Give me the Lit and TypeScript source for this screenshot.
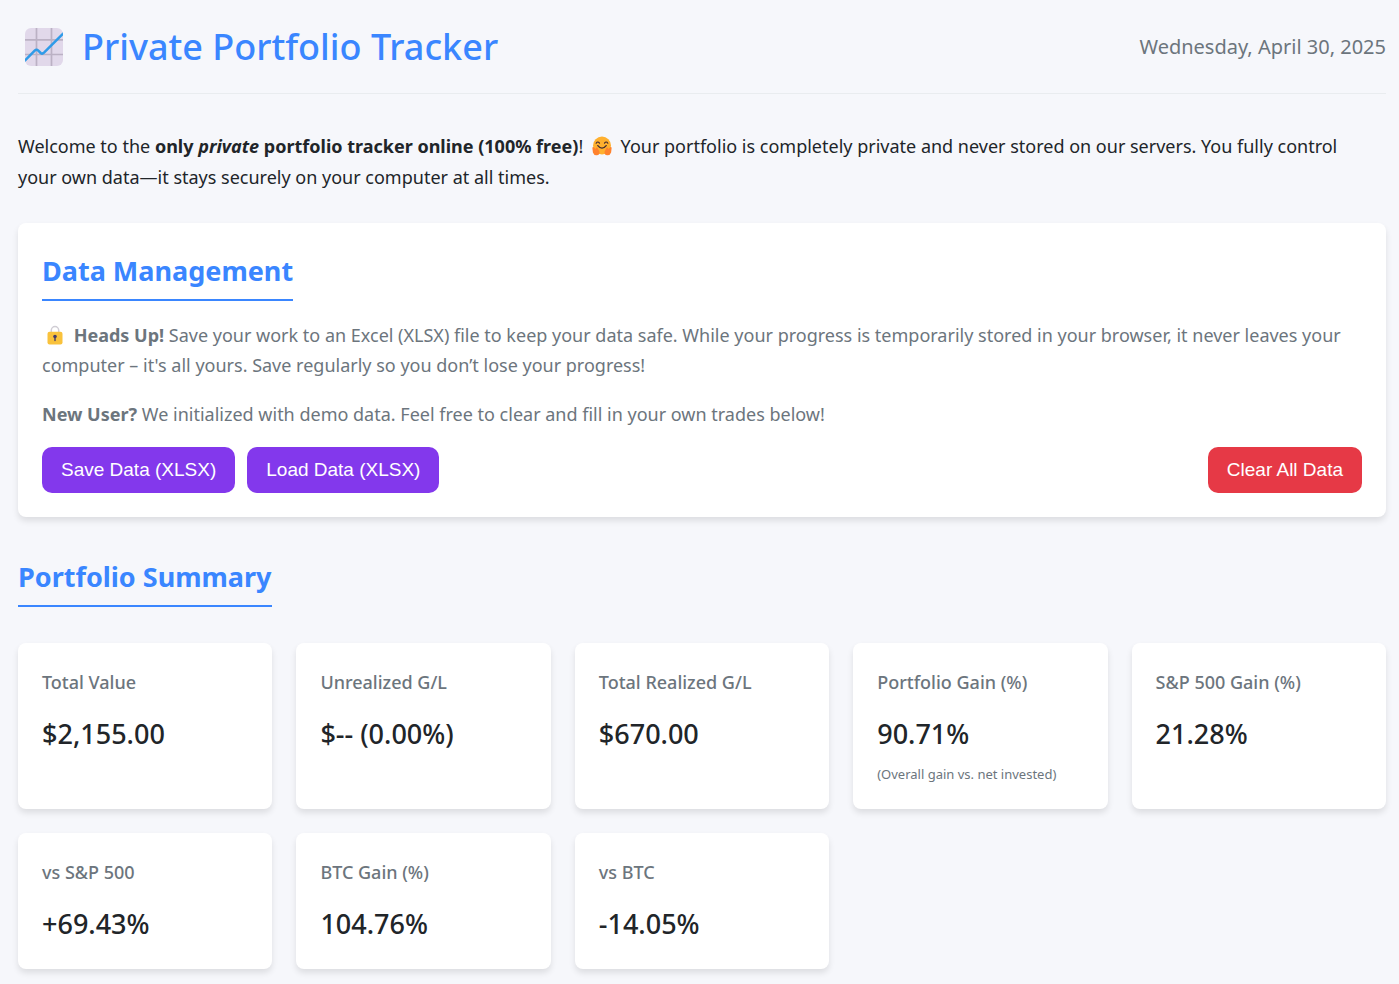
import { LitElement, html, css, nothing } from "lit";
import { customElement, property } from "lit/decorators.js";

interface Metric {
  label: string;
  value: string;
  note?: string;
}

const METRICS: Metric[] = [
  { label: "Total Value", value: "$2,155.00" },
  { label: "Unrealized G/L", value: "$-- (0.00%)" },
  { label: "Total Realized G/L", value: "$670.00" },
  { label: "Portfolio Gain (%)", value: "90.71%", note: "(Overall gain vs. net invested)" },
  { label: "S&P 500 Gain (%)", value: "21.28%" },
  { label: "vs S&P 500", value: "+69.43%" },
  { label: "BTC Gain (%)", value: "104.76%" },
  { label: "vs BTC", value: "-14.05%" },
];

const chartIcon = html`
  <svg class="chart" viewBox="0 0 38 38" aria-hidden="true">
    <defs><clipPath id="tile"><rect width="38" height="38" rx="6" /></clipPath></defs>
    <g clip-path="url(#tile)">
      <rect width="38" height="38" fill="#e1d8ea" />
      <path d="M11.5 0V38M26.5 0V38M0 11.8H38M0 26.5H38" stroke="#bbb1c4" stroke-width="1.7" fill="none" />
      <path d="M-1 33.5 9.7 22.6Q11.5 20.8 13.3 22.6L15.7 25Q17.3 26.3 19 24.7L39 4.8"
        stroke="#2f9be8" stroke-width="2.5" fill="none" stroke-linejoin="round" />
    </g>
  </svg>
`;

const hugIcon = html`
  <svg class="hug" viewBox="0 0 20 20" aria-hidden="true">
    <circle cx="10" cy="9.5" r="9" fill="#ffb02e" />
    <path d="M4.2 7.2Q5.7 4.8 7.5 7.2M12.5 7.2Q14.3 4.8 15.8 7.2" stroke="#402a32" stroke-width="1.2" fill="none" stroke-linecap="round" />
    <path d="M5.8 9.6Q10 14.8 14.2 9.6" stroke="#402a32" stroke-width="1.3" fill="none" stroke-linecap="round" />
    <path d="M.4 12.2Q.3 10.7 1.6 11L3.5 12.9 4.3 11.7Q5.4 11 5.7 12.3L7.4 15.5Q8 18.9 4.8 19.3 1.8 19.5.9 16.6Z" fill="#ff822d" />
    <path d="M19.6 12.2Q19.7 10.7 18.4 11L16.5 12.9 15.7 11.7Q14.6 11 14.3 12.3L12.6 15.5Q12 18.9 15.2 19.3 18.2 19.5 19.1 16.6Z" fill="#ff822d" />
  </svg>
`;

const lockIcon = html`
  <svg class="lock" viewBox="0 0 16 20" aria-hidden="true">
    <path d="M4.3 8V5.3a3.7 3.7 0 0 1 7.4 0V8" stroke="#d0cdd4" stroke-width="1.5" fill="none" />
    <rect x=".5" y="6.8" width="15" height="12.7" rx="2" fill="#f9c23c" />
    <circle cx="8" cy="11.5" r="1.8" fill="#433b6b" />
    <path d="M8 11.5V15.6" stroke="#433b6b" stroke-width="1.4" stroke-linecap="round" />
  </svg>
`;

@customElement("metric-card")
class MetricCard extends LitElement {
  @property({ attribute: false }) metric!: Metric;

  static styles = css`
    :host {
      display: block;
      padding: 24px;
      border-radius: 8px;
      background: #fff;
      box-shadow: 0 4px 6px rgba(0, 0, 0, 0.1);
    }
    .label {
      margin: 0 0 15px;
      font-size: 18px;
      font-weight: 500;
      line-height: 31px;
      color: #6c757d;
    }
    .value {
      margin: 0;
      font-size: 27px;
      font-weight: 500;
      line-height: 42px;
      color: #212529;
    }
    .note {
      margin: 8px 0 0;
      font-size: 13px;
      line-height: 22px;
      color: #6c757d;
    }
  `;

  render() {
    const { label, value, note } = this.metric;
    return html`
      <h3 class="label">${label}</h3>
      <p class="value">${value}</p>
      ${note ? html`<p class="note">${note}</p>` : nothing}
    `;
  }
}

@customElement("app-root")
class AppRoot extends LitElement {
  static styles = css`
    :host {
      display: block;
      box-sizing: border-box;
      min-height: 100vh;
      padding: 0 13px 15px 18px;
      background: #f6f7fb;
      color: #212529;
      font-family: "Segoe UI", "Noto Sans", "Open Sans", sans-serif;
      font-size: 18px;
    }
    .header {
      display: flex;
      align-items: center;
      justify-content: space-between;
      height: 93px;
      border-bottom: 1px solid #e9ecef;
    }
    .title {
      display: flex;
      align-items: center;
      gap: 19px;
      margin: 0;
      padding-left: 7px;
      color: #3a86ff;
      font-size: 36px;
      font-weight: 500;
      line-height: 60px;
    }
    .date {
      color: #6c757d;
      font-size: 20px;
    }
    .chart {
      width: 38px;
      height: 38px;
    }
    .intro {
      margin: 37px 0 30px;
      padding-right: 24px;
      line-height: 31px;
    }
    .hug {
      width: 20px;
      height: 20px;
      margin: 0 4px;
      vertical-align: -3px;
    }
    .lock {
      width: 16px;
      height: 20px;
      margin: 0 6px 0 5px;
      vertical-align: -3px;
    }
    .panel {
      padding: 24px;
      border-radius: 8px;
      background: #fff;
      box-shadow: 0 4px 6px rgba(0, 0, 0, 0.1);
    }
    .heading {
      width: fit-content;
      margin: 0;
      padding-bottom: 4px;
      border-bottom: 2px solid #3a86ff;
      color: #3a86ff;
      font-size: 27px;
      font-weight: 700;
      line-height: 48px;
    }
    .text {
      margin: 19px 0 18px;
      color: #6c757d;
      line-height: 30px;
    }
    .actions {
      display: flex;
      flex-wrap: wrap;
      gap: 12px;
    }
    .button {
      height: 46px;
      padding: 0 19px;
      border: 0;
      border-radius: 10px;
      background: #8338ec;
      color: #fff;
      font-family: "Liberation Sans", Arial, sans-serif;
      font-size: 19px;
      cursor: pointer;
    }
    .danger {
      margin-left: auto;
      background: #e63946;
    }
    .summary {
      margin-top: 36px;
    }
    .grid {
      display: grid;
      grid-template-columns: repeat(auto-fill, minmax(240px, 1fr));
      gap: 24px;
      margin-top: 36px;
    }
  `;

  render() {
    return html`
      <header class="header">
        <h1 class="title">${chartIcon}<span>Private Portfolio Tracker</span></h1>
        <time class="date" datetime="2025-04-30">Wednesday, April 30, 2025</time>
      </header>
      <main>
        <p class="intro">
          Welcome to the <strong>only <em>private</em> portfolio tracker online (100% free)</strong>!
          ${hugIcon} Your portfolio is completely private and never stored on our servers. You fully
          control your own data—it stays securely on your computer at all times.
        </p>
        <section class="panel">
          <h2 class="heading">Data Management</h2>
          <p class="text">
            ${lockIcon} <strong>Heads Up!</strong> Save your work to an Excel (XLSX) file to keep your
            data safe. While your progress is temporarily stored in your browser, it never leaves your
            computer – it's all yours. Save regularly so you don’t lose your progress!
          </p>
          <p class="text">
            <strong>New User?</strong> We initialized with demo data. Feel free to clear and fill in
            your own trades below!
          </p>
          <div class="actions">
            <button class="button" type="button">Save Data (XLSX)</button>
            <button class="button" type="button">Load Data (XLSX)</button>
            <button class="button danger" type="button">Clear All Data</button>
          </div>
        </section>
        <section class="summary">
          <h2 class="heading">Portfolio Summary</h2>
          <div class="grid">
            ${METRICS.map((metric) => html`<metric-card .metric=${metric}></metric-card>`)}
          </div>
        </section>
      </main>
    `;
  }
}
